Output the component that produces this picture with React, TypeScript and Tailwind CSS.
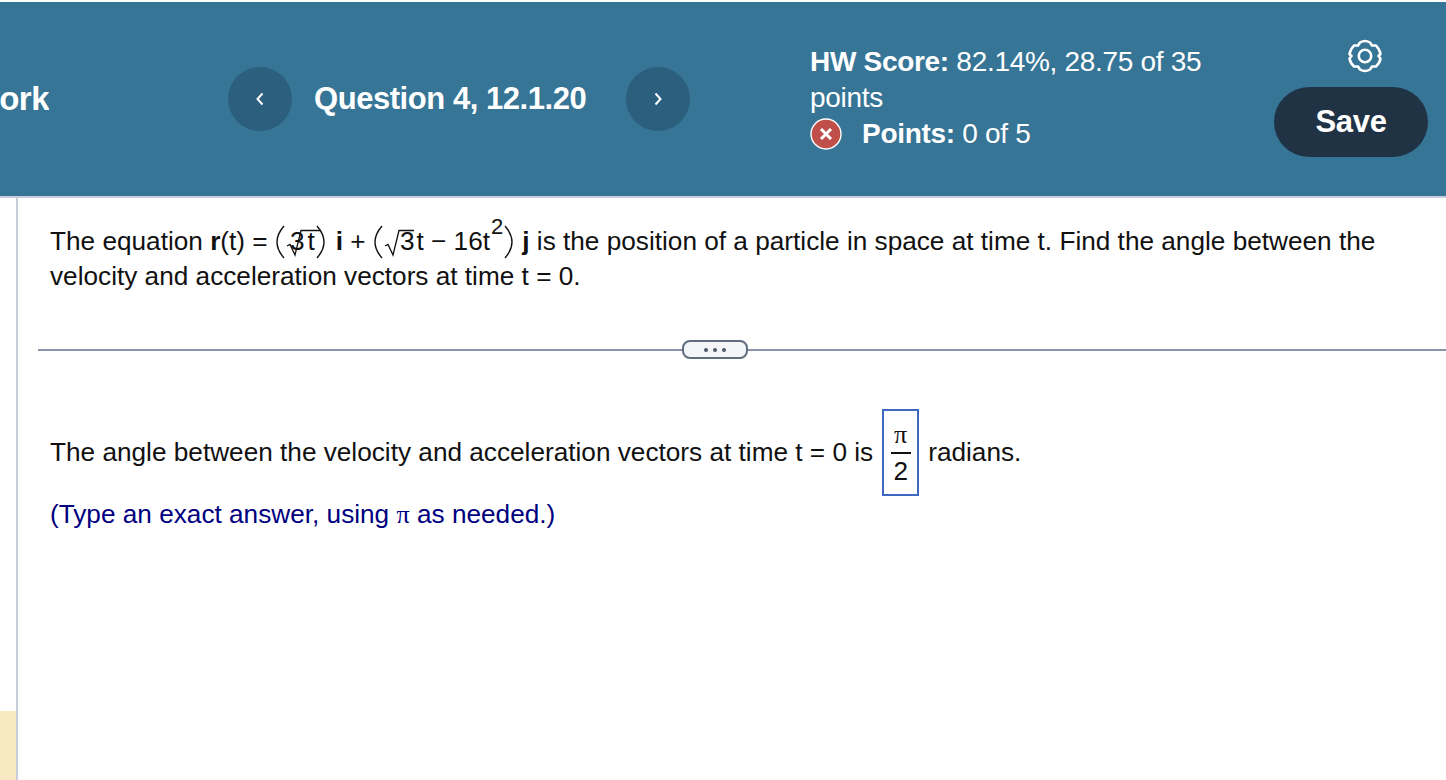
const Sqrt = ({ w }: { w: number }) => (
  <svg width={w} height="30" viewBox={`0 0 ${w} 30`} className="inline-block shrink-0" fill="none" stroke="#111" strokeWidth="1.3">
    <path d={`M1 19 L4 17.5 L9 28 L15 3.5 H${w}`} />
  </svg>
);

const Paren = ({ right }: { right?: boolean }) => (
  <svg width="11" height="36" viewBox="0 0 11 36" className="inline-block shrink-0" fill="none" stroke="#111" strokeWidth="1.4">
    <path d={right ? "M2 2 Q9 10 9 18 Q9 26 2 34" : "M9 2 Q2 10 2 18 Q2 26 9 34"} />
  </svg>
);

export default function App() {
  return (
    <div className="h-[780px] w-[1446px] overflow-hidden bg-white pt-[2px] font-['Liberation_Sans',Arial,sans-serif] text-[#111]">
      <header className="flex h-[194px] items-center bg-[#367596] text-white">
        <div className="flex w-[228px] shrink-0 items-center">
          <div className="flex w-[49px] justify-end overflow-hidden">
            <span className="text-[33px] font-bold tracking-[-0.5px]">Homework</span>
          </div>
        </div>
        <button className="flex h-[64px] w-[64px] shrink-0 items-center justify-center rounded-full bg-[#2c5f7d]">
          <svg width="10" height="14" viewBox="0 0 10 14" fill="none" stroke="#fff" strokeWidth="2">
            <path d="M7.5 1.5 L2.5 7 L7.5 12.5" />
          </svg>
        </button>
        <div className="ml-[22px] w-[312px] shrink-0 text-[31px] font-bold tracking-[-0.45px]">Question 4, 12.1.20</div>
        <button className="flex h-[64px] w-[64px] shrink-0 items-center justify-center rounded-full bg-[#2c5f7d]">
          <svg width="10" height="14" viewBox="0 0 10 14" fill="none" stroke="#fff" strokeWidth="2">
            <path d="M2.5 1.5 L7.5 7 L2.5 12.5" />
          </svg>
        </button>
        <div className="ml-[120px] mt-[-2px] w-[430px] shrink-0 text-[28px] leading-[36px] tracking-[-0.3px]">
          <div className="w-[420px]"><span className="font-bold">HW Score:</span> 82.14%, 28.75 of 35 points</div>
          <div className="flex items-center">
            <svg width="32" height="32" viewBox="0 0 32 32" className="mr-[20px] shrink-0">
              <circle cx="16" cy="16" r="15" fill="#bf4f48" stroke="#fff" strokeWidth="1.4" />
              <path d="M11 11 L21 21 M21 11 L11 21" stroke="#fff" strokeWidth="3" />
            </svg>
            <span><span className="font-bold">Points:</span> 0 of 5</span>
          </div>
        </div>
        <div className="ml-[34px] mt-[-2px] flex w-[154px] shrink-0 flex-col items-center gap-[14px]">
          <svg width="36" height="34" viewBox="0 0 36 34" fill="none" stroke="#fff" strokeWidth="2.6" className="ml-[28px]" strokeLinejoin="round">
            <path d="M13 3.5 Q18 0.5 23 3.5 L25 6.5 L29 6.5 Q33 11 33.5 15 L31.5 17 L33.5 19.5 Q33 23.5 29 27.5 L25 27.5 L23 30.5 Q18 33.5 13 30.5 L11 27.5 L7 27.5 Q3 23.5 2.5 19.5 L4.5 17 L2.5 15 Q3 11 7 6.5 L11 6.5 Z" />
            <circle cx="18" cy="17" r="6.2" />
          </svg>
          <button className="h-[70px] w-[154px] rounded-[35px] bg-[#203345] text-[31px] font-bold tracking-[-0.3px] text-white">Save</button>
        </div>
      </header>
      <div className="h-[2px] bg-[#c9cedd]" />
      <div className="flex h-[582px]">
        <aside className="flex w-[18px] shrink-0 flex-col justify-end border-r-2 border-[#c9cedd]">
          <div className="h-[69px] bg-[#f7e9c2]" />
        </aside>
        <main className="min-w-0 flex-1">
          <div className="ml-[32px] mt-[26px] w-[1380px] text-[26.2px] leading-[35px]">
            <div className="flex h-[35px] items-center whitespace-pre">
              <span>The equation </span><b>r</b><span>(t) = </span>
              <Paren /><Sqrt w={34} /><span className="ml-[-14px] w-[0px]"></span>
              <span className="ml-[-16px]">3</span><span className="ml-[3px]">t</span><Paren right />
              <span className="ml-[10px] font-bold">i</span><span> + </span>
              <Paren /><Sqrt w={30} />
              <span className="ml-[-14px]">3</span><span className="ml-[2px]">t − 16t</span><sup className="ml-[1px] mt-[-8px] text-[22px]">2</sup><Paren right />
              <span className="ml-[8px] font-bold">j</span>
              <span> is the position of a particle in space at time t. Find the angle between the</span>
            </div>
            <div className="whitespace-pre">velocity and acceleration vectors at time t = 0.</div>
          </div>
          <div className="relative ml-[20px] mt-[55px] h-[2px] bg-[#8a94a6]">
            <div className="absolute left-[644px] top-[-9px] flex h-[19px] w-[66px] items-center justify-center gap-[5px] rounded-[8px] border-2 border-[#5f6d7c] bg-[#f3f5f8]">
              <span className="h-[4px] w-[4px] rounded-full bg-[#4c5866]" />
              <span className="h-[4px] w-[4px] rounded-full bg-[#4c5866]" />
              <span className="h-[4px] w-[4px] rounded-full bg-[#4c5866]" />
            </div>
          </div>
          <div className="ml-[32px] mt-[58px] flex h-[87px] items-center whitespace-pre text-[26.2px]">
            <span>The angle between the velocity and acceleration vectors at time t = 0 is</span>
            <div className="ml-[9px] flex h-[87px] w-[37px] flex-col items-center justify-center border-2 border-[#3f68c4]">
              <span className="font-['Liberation_Serif',serif] text-[26px] leading-[34px]">π</span>
              <span className="h-[2px] w-[20px] bg-[#111]" />
              <span className="leading-[34px]">2</span>
            </div>
            <span className="ml-[9px]">radians.</span>
          </div>
          <div className="ml-[32px] mt-[1px] text-[26.2px] leading-[35px] text-[#00007f]">
            (Type an exact answer, using <span className="font-['Liberation_Serif',serif]">π</span> as needed.)
          </div>
        </main>
      </div>
    </div>
  );
}
